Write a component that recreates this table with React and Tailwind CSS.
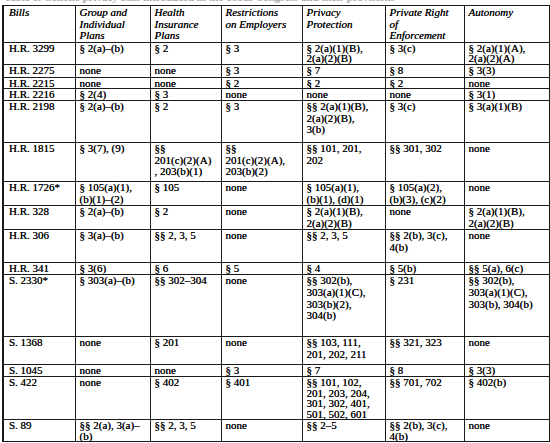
const header = [
  ['Bills'],
  ['Group and', 'Individual', 'Plans'],
  ['Health', 'Insurance', 'Plans'],
  ['Restrictions', 'on Employers'],
  ['Privacy', 'Protection'],
  ['Private Right', 'of', 'Enforcement'],
  ['Autonomy'],
];

const tight = 'leading-[10.5px]';
const loose = 'leading-[11.6px]';

// each cell is a list of lines, wrapped the way the printed table wraps them
const rows = [
  { h: 'h-[22px]', lead: tight, cells: [['H.R. 3299'], ['§ 2(a)–(b)'], ['§ 2'], ['§ 3'], ['§ 2(a)(1)(B),', '2(a)(2)(B)'], ['§ 3(c)'], ['§ 2(a)(1)(A),', '2(a)(2)(A)']] },
  { h: 'h-[13px]', lead: tight, cells: [['H.R. 2275'], ['none'], ['none'], ['§ 3'], ['§ 7'], ['§ 8'], ['§ 3(3)']] },
  { h: 'h-[11px]', lead: tight, cells: [['H.R. 2215'], ['none'], ['none'], ['§ 2'], ['§ 2'], ['§ 2'], ['none']] },
  { h: 'h-[12px]', lead: tight, cells: [['H.R. 2216'], ['§ 2(4)'], ['§ 3'], ['none'], ['none'], ['none'], ['§ 3(1)']] },
  { h: 'h-[42px]', lead: loose, cells: [['H.R. 2198'], ['§ 2(a)–(b)'], ['§ 2'], ['§ 3'], ['§§ 2(a)(1)(B),', '2(a)(2)(B),', '3(b)'], ['§ 3(c)'], ['§ 3(a)(1)(B)']] },
  { h: 'h-[39px]', lead: loose, cells: [['H.R. 1815'], ['§ 3(7), (9)'], ['§§', '201(c)(2)(A)', ', 203(b)(1)'], ['§§', '201(c)(2)(A),', '203(b)(2)'], ['§§ 101, 201,', '202'], ['§§ 301, 302'], ['none']] },
  { h: 'h-[24px]', lead: loose, cells: [['H.R. 1726*'], ['§ 105(a)(1),', '(b)(1)–(2)'], ['§ 105'], ['none'], ['§ 105(a)(1),', '(b)(1), (d)(1)'], ['§ 105(a)(2),', '(b)(3), (c)(2)'], ['none']] },
  { h: 'h-[24px]', lead: loose, cells: [['H.R. 328'], ['§ 2(a)–(b)'], ['§ 2'], ['none'], ['§ 2(a)(1)(B),', '2(a)(2)(B)'], ['none'], ['§ 2(a)(1)(B),', '2(a)(2)(B)']] },
  { h: 'h-[33px]', lead: loose, cells: [['H.R. 306'], ['§ 3(a)–(b)'], ['§§ 2, 3, 5'], ['none'], ['§§ 2, 3, 5'], ['§§ 2(b), 3(c),', '4(b)'], ['none']] },
  { h: 'h-[12px]', lead: tight, cells: [['H.R. 341'], ['§ 3(6)'], ['§ 6'], ['§ 5'], ['§ 4'], ['§ 5(b)'], ['§§ 5(a), 6(c)']] },
  { h: 'h-[62px]', lead: loose, cells: [['S. 2330*'], ['§ 303(a)–(b)'], ['§§ 302–304'], ['none'], ['§§ 302(b),', '303(a)(1)(C),', '303(b)(2),', '304(b)'], ['§ 231'], ['§§ 302(b),', '303(a)(1)(C),', '303(b), 304(b)']] },
  { h: 'h-[28px]', lead: loose, cells: [['S. 1368'], ['none'], ['§ 201'], ['none'], ['§§ 103, 111,', '201, 202, 211'], ['§§ 321, 323'], ['none']] },
  { h: 'h-[12px]', lead: tight, cells: [['S. 1045'], ['none'], ['none'], ['§ 3'], ['§ 7'], ['§ 8'], ['§ 3(3)']] },
  { h: 'h-[43px]', lead: tight, cells: [['S. 422'], ['none'], ['§ 402'], ['§ 401'], ['§§ 101, 102,', '201, 203, 204,', '301, 302, 401,', '501, 502, 601'], ['§§ 701, 702'], ['§ 402(b)']] },
  { h: 'h-[22px]', lead: tight, cells: [['S. 89'], ['§§ 2(a), 3(a)–', '(b)'], ['§§ 2, 3, 5'], ['none'], ['§§ 2–5'], ['§§ 2(b), 3(c),', '4(b)'], ['none']] },
];

const widths = ['w-[72px]', 'w-[75px]', 'w-[71px]', 'w-[81px]', 'w-[83px]', 'w-[79px]', 'w-[85px]'];

const Lines = ({ lines }) => (
  <>
    {lines.map((l, i) => (
      <span key={i} className="block whitespace-nowrap">{l}</span>
    ))}
  </>
);

const App = () => {
  return (
    <div className="bg-white w-[550px] h-[443px] overflow-hidden pl-[2px] text-[#111] font-['Liberation_Serif',serif] [text-shadow:0_0_0.5px_#000]">
      <div className="h-[5px] overflow-hidden">
        <p className="-mt-[9px] text-[11px] leading-[12px] font-bold text-[#a8a8a8] whitespace-nowrap pl-[2px] [text-shadow:none]">
          Table 1. Genetic privacy bills introduced in the 105th Congress and their provisions
        </p>
      </div>

      <table className="table-fixed border-collapse w-[546px] border border-l-2 border-[#1a1a1a] text-[11px]">
        <colgroup>
          {widths.map((w, i) => (
            <col key={i} className={w} />
          ))}
        </colgroup>
        <thead>
          <tr className="h-[36px]">
            {header.map((c, i) => (
              <th
                key={i}
                className={`border border-[#1a1a1a] align-top text-left font-normal italic leading-[11.5px] pt-px pr-[2px] ${i === 0 ? 'pl-[5px]' : 'pl-[4px]'}`}
              >
                <Lines lines={c} />
              </th>
            ))}
          </tr>
        </thead>
        <tbody>
          {rows.map((r, ri) => (
            <tr key={ri} className={`${r.h} ${r.lead}`}>
              {r.cells.map((c, ci) => (
                <td
                  key={ci}
                  className={`border border-[#1a1a1a] align-top p-0 pr-[2px] ${ci === 0 ? 'pl-[5px]' : 'pl-[4px]'}`}
                >
                  <Lines lines={c} />
                </td>
              ))}
            </tr>
          ))}
        </tbody>
      </table>
    </div>
  );
};

export default App;
